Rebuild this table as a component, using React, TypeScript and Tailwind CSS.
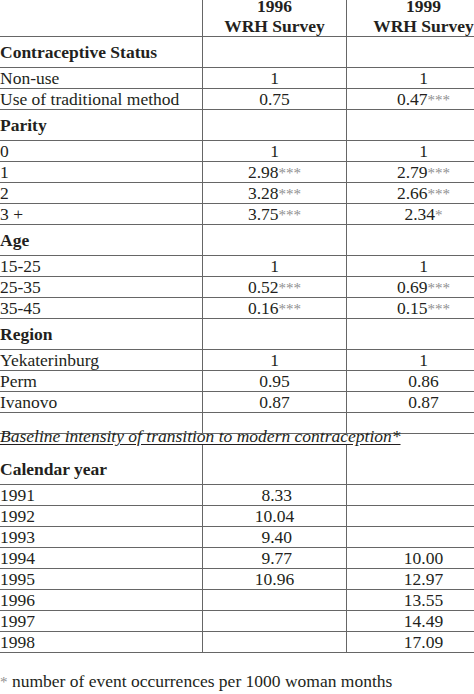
import React from 'react'

// one table row: heading rows are bold and taller, data rows hold two values
type Row =
  | { kind: 'head'; label: string }
  | { kind: 'data'; label: string; a?: string; b?: string }
  | { kind: 'blank' }

const topRows: Row[] = [
  { kind: 'head', label: 'Contraceptive Status' },
  { kind: 'data', label: 'Non-use', a: '1', b: '1' },
  { kind: 'data', label: 'Use of traditional method', a: '0.75', b: '0.47***' },
  { kind: 'head', label: 'Parity' },
  { kind: 'data', label: '0', a: '1', b: '1' },
  { kind: 'data', label: '1', a: '2.98***', b: '2.79***' },
  { kind: 'data', label: '2', a: '3.28***', b: '2.66***' },
  { kind: 'data', label: '3 +', a: '3.75***', b: '2.34*' },
  { kind: 'head', label: 'Age' },
  { kind: 'data', label: '15-25', a: '1', b: '1' },
  { kind: 'data', label: '25-35', a: '0.52***', b: '0.69***' },
  { kind: 'data', label: '35-45', a: '0.16***', b: '0.15***' },
  { kind: 'head', label: 'Region' },
  { kind: 'data', label: 'Yekaterinburg', a: '1', b: '1' },
  { kind: 'data', label: 'Perm', a: '0.95', b: '0.86' },
  { kind: 'data', label: 'Ivanovo', a: '0.87', b: '0.87' },
  { kind: 'blank' },
]

const yearRows: Row[] = [
  { kind: 'data', label: '1991', a: '\u00a08.33' },
  { kind: 'data', label: '1992', a: '10.04' },
  { kind: 'data', label: '1993', a: '\u00a09.40' },
  { kind: 'data', label: '1994', a: '\u00a09.77', b: '10.00' },
  { kind: 'data', label: '1995', a: '10.96', b: '12.97' },
  { kind: 'data', label: '1996', b: '13.55' },
  { kind: 'data', label: '1997', b: '14.49' },
  { kind: 'data', label: '1998', b: '17.09' },
]

const line = 'border-[#666666]'
const cols = 'grid grid-cols-[202px_144px_154px]'

function Value({ v }: { v?: string }) {
  if (!v) return null
  const m = v.match(/^(.*?)(\**)$/)
  const num = m ? m[1] : v
  const stars = m ? m[2] : ''
  return (
    <span>
      {num}
      {stars && <span className="text-[15px] text-[#8f8f8f]">{stars}</span>}
    </span>
  )
}

function TableRow({ row }: { row: Row }) {
  if (row.kind === 'head') {
    return (
      <div className={`${cols} h-[31px] border-b ${line}`}>
        <div className="flex items-center font-bold">{row.label}</div>
        <div className={`border-l ${line}`} />
        <div className={`border-l ${line}`} />
      </div>
    )
  }
  if (row.kind === 'blank') {
    return (
      <div className={`${cols} h-[21px] border-b ${line}`}>
        <div />
        <div className={`border-l ${line}`} />
        <div className={`border-l ${line}`} />
      </div>
    )
  }
  return (
    <div className={`${cols} h-[21px] border-b ${line}`}>
      <div className="whitespace-nowrap">{row.label}</div>
      <div className={`border-l ${line} text-center`}>
        <Value v={row.a} />
      </div>
      <div className={`border-l ${line} text-center`}>
        <Value v={row.b} />
      </div>
    </div>
  )
}

export default function App() {
  return (
    <div className="w-[474px] h-[694px] overflow-hidden bg-white text-[#231f20] text-[17.5px] leading-[20px] font-['Liberation_Serif','Times_New_Roman',serif]">
      <div className="w-[500px]">
        {/* header */}
        <div className={`${cols} h-[37px] border-b ${line} font-bold`}>
          <div />
          <div className={`border-l ${line} flex flex-col justify-end items-center overflow-hidden`}>
            <span>1996</span>
            <span>WRH Survey</span>
          </div>
          <div className={`border-l ${line} flex flex-col justify-end items-center overflow-hidden`}>
            <span>1999</span>
            <span>WRH Survey</span>
          </div>
        </div>

        {topRows.map((r, i) => (
          <TableRow key={i} row={r} />
        ))}

        {/* baseline intensity caption spans all columns */}
        <div className="h-[11px] leading-[4px] italic underline underline-offset-[2px] whitespace-nowrap">
          Baseline intensity of transition to modern contraception*
        </div>

        <div className={`${cols} h-[40px] border-b ${line}`}>
          <div className="flex items-end pb-[5px] font-bold">Calendar year</div>
          <div className={`border-l ${line}`} />
          <div className={`border-l ${line}`} />
        </div>

        {yearRows.map((r, i) => (
          <TableRow key={i} row={r} />
        ))}
      </div>

      <p className="mt-[18px] whitespace-nowrap">
        <span className="text-[15px] text-[#8f8f8f]">*</span> number of event occurrences per 1000 woman months
      </p>
    </div>
  )
}
